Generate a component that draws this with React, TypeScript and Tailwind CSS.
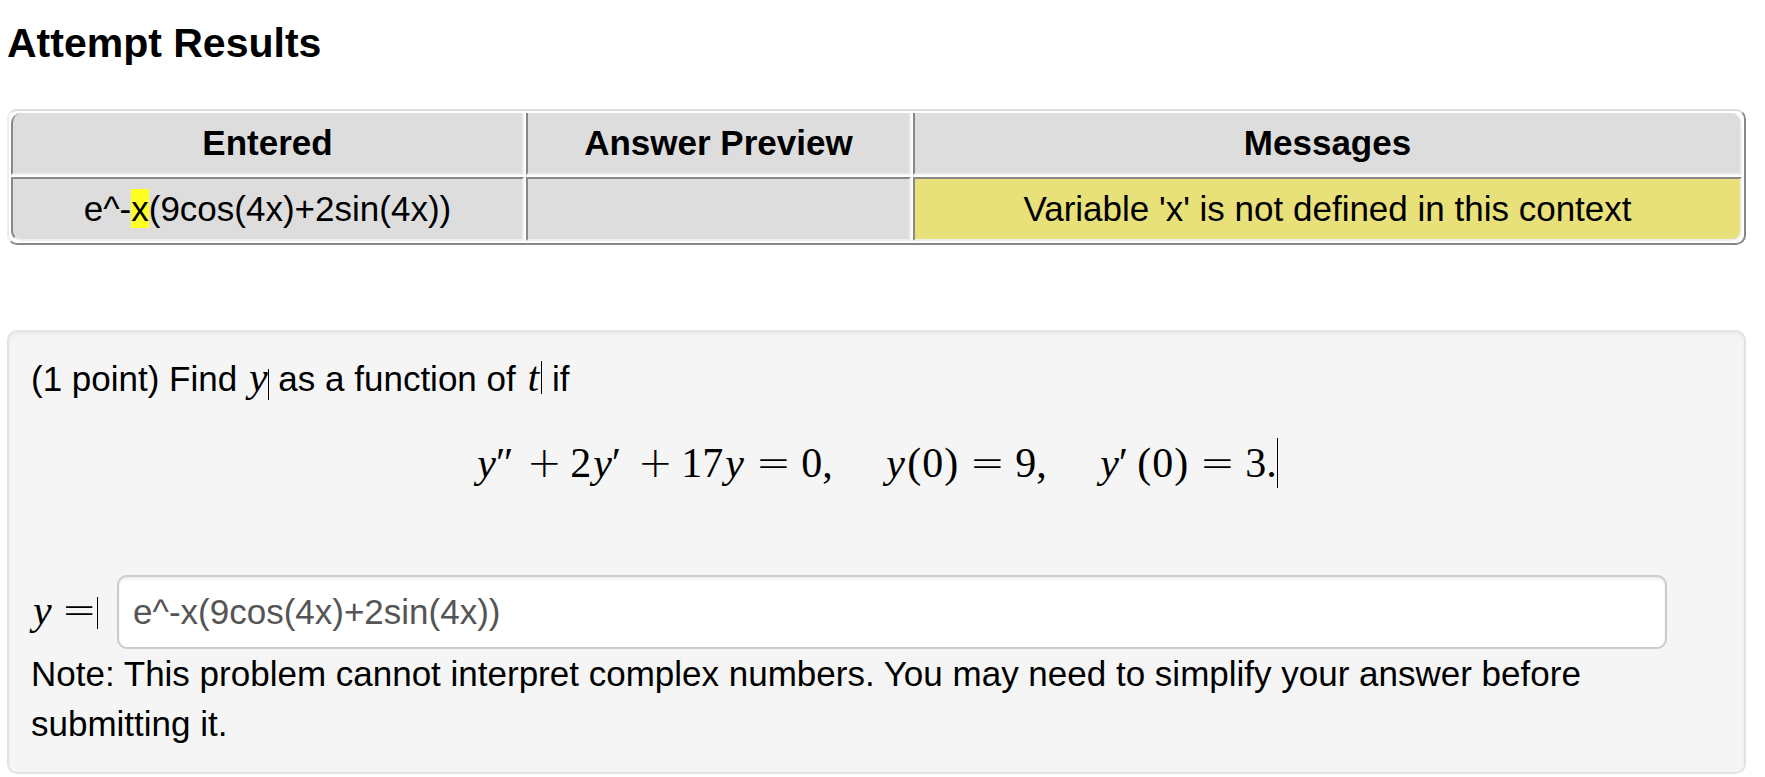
import { ReactNode, useState } from "react";

function Var(props: { name: string }) {
  return <i className="inline-block w-[22px] pl-[2px]">{props.name}</i>;
}

function Prime(props: { double?: boolean }) {
  return (
    <i
      className={
        "-ml-1 inline-block " + (props.double ? "w-[25px]" : "w-[20px]")
      }
    >
      {props.double ? "″" : "′"}
    </i>
  );
}

// + sits a little closer to its operands than = does
function Plus() {
  return (
    <span className="mx-2 w-9 text-center font-['DejaVu_Sans',sans-serif] font-extralight">
      +
    </span>
  );
}

function Equals(props: { className?: string }) {
  return (
    <span
      className={
        "w-9 text-center font-['DejaVu_Sans',sans-serif] font-extralight " +
        (props.className || "mx-[10px]")
      }
    >
      =
    </span>
  );
}

function Paren(props: { children: ReactNode }) {
  return <span className="inline-block w-4 text-center">{props.children}</span>;
}

function Comma() {
  return <span className="mr-[50px] w-3">,</span>;
}

// thin rule that closes every math fragment
function Rule(props: { className: string }) {
  return <span className={"inline-block w-px bg-black " + props.className} />;
}

function ResultsTable() {
  const cell =
    "border-2 border-t-[#888] border-l-[#888] border-r-[#eee] border-b-[#eee] p-[5px]";
  const head =
    "border-2 border-t-0 border-l-[#888] border-r-[#eee] border-b-[#eee] bg-[#ddd] p-[5px] font-bold";

  return (
    <table className="w-full border-separate border-spacing-[2px] rounded-[10px] border-2 border-t-[#ddd] border-l-[#eee] border-r-[#888] border-b-[#888] text-center">
      <colgroup>
        <col className="w-[29.7%]" />
        <col className="w-[22.3%]" />
        <col />
      </colgroup>
      <thead>
        <tr>
          <th className={head + " rounded-tl-[10px]"}>Entered</th>
          <th className={head}>Answer Preview</th>
          <th className={head + " rounded-tr-[10px]"}>Messages</th>
        </tr>
      </thead>
      <tbody>
        <tr>
          <td className={cell + " rounded-bl-[10px] bg-[#ddd]"}>
            e^-<span className="bg-[#ffff22]">x</span>(9cos(4x)+2sin(4x))
          </td>
          <td className={cell + " bg-[#ddd]"}></td>
          <td className={cell + " rounded-br-[10px] bg-[#e8e078]"}>
            Variable 'x' is not defined in this context
          </td>
        </tr>
      </tbody>
    </table>
  );
}

function Problem() {
  const [answer, setAnswer] = useState("e^-x(9cos(4x)+2sin(4x))");
  const math = "font-['Liberation_Serif',serif] text-[42px]";

  return (
    <section className="rounded-[10px] border-2 border-[#e3e3e3] bg-[#f5f5f5] p-[22px] pb-[23px] shadow-[inset_0_2px_3px_rgba(0,0,0,0.05)]">
      <p>
        (1 point) Find{" "}
        <span className={math + " leading-none"}>
          <i className="pl-[2px]">y</i>
          <Rule className="h-[31px] align-[-9px]" />
        </span>{" "}
        as a function of{" "}
        <span className={math + " leading-none"}>
          <i className="px-[2px]">t</i>
          <Rule className="h-[33px] align-[-3px]" />
        </span>{" "}
        if
      </p>

      <div className={math + " mt-[34px] flex items-baseline justify-center"}>
        <Var name="y" />
        <Prime double />
        <Plus />2
        <Var name="y" />
        <Prime />
        <Plus />
        17
        <Var name="y" />
        <Equals />0
        <Comma />
        <Var name="y" />
        <Paren>(</Paren>0<Paren>)</Paren>
        <Equals />9
        <Comma />
        <Var name="y" />
        <Prime />
        <Paren>(</Paren>0<Paren>)</Paren>
        <Equals />
        3.
        <Rule className="-mb-3 h-[50px] self-start" />
      </div>

      <div className="mt-[87px] flex items-baseline">
        <label htmlFor="answer" className={math + " flex items-baseline"}>
          <Var name="y" />
          <Equals className="ml-2" />
          <Rule className="mt-3 h-8 self-start" />
        </label>
        <input
          id="answer"
          type="text"
          value={answer}
          onChange={(e) => setAnswer(e.target.value)}
          className="mr-[55px] ml-[19px] h-[74px] min-w-0 flex-1 rounded-[10px] border-2 border-[#ccc] bg-white px-[14px] text-[#555] shadow-[inset_0_2px_3px_rgba(0,0,0,0.075)]"
        />
      </div>
      <p>
        Note: This problem cannot interpret complex numbers. You may need to
        simplify your answer before submitting it.
      </p>
    </section>
  );
}

export default function App() {
  return (
    <main className="bg-white pt-[18px] pr-[19px] pb-1 pl-[7px] font-['Liberation_Sans',Arial,sans-serif] text-[35px] leading-[50px] text-black">
      <h1 className="mb-[41px] text-[41px] leading-[50px] font-bold">
        Attempt Results
      </h1>
      <ResultsTable />
      <div className="mt-[85px]">
        <Problem />
      </div>
    </main>
  );
}
